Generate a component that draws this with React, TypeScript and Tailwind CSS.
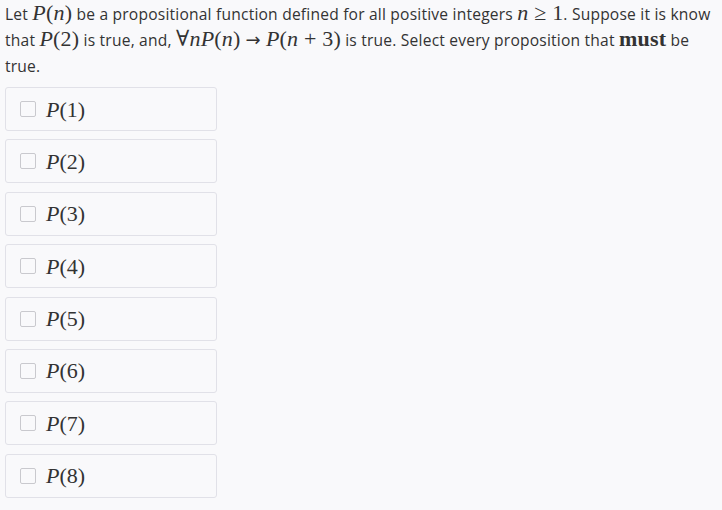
import React from "react";

const SERIF = '"Liberation Serif", "DejaVu Serif", serif';
const M = ({ children }: { children: React.ReactNode }) => (
  <span className="text-[22px] leading-none" style={{ fontFamily: SERIF }}>
    {children}
  </span>
);
const I = ({ children }: { children: React.ReactNode }) => <i>{children}</i>;
const Arrow = () => (
  <span className="text-[18px] mx-[5px]" style={{ fontFamily: '"DejaVu Sans", sans-serif' }}>→</span>
);

export default function App() {
  const items = [1, 2, 3, 4, 5, 6, 7, 8];
  return (
    <div className="min-h-[510px] w-[722px] bg-[#f9f9fb] text-[#333] px-[5px] pt-[1px]" style={{ fontFamily: '"Open Sans", sans-serif' }}>
      <p className="text-[15.6px] leading-[26px] tracking-[0.2px] pr-[4px]">
        Let <M><I>P</I>(<I>n</I>)</M> be a propositional function defined for all positive integers <M><I>n</I> ≥ 1</M>. Suppose it is know that <M><I>P</I>(2)</M> is true, and, <M>∀<I>nP</I>(<I>n</I>)<Arrow /><I>P</I>(<I>n</I> + 3)</M> is true. Select every proposition that <M><b>must</b></M> be true.
      </p>
      <div className="mt-[8px] flex flex-col gap-[8.4px]">
        {items.map((n) => (
          <div key={n} className="w-[212px] h-[44px] border border-[#e1e1e8] rounded-[3px] flex items-center pl-[14px]">
            <span className="w-[16px] h-[16px] border border-[#c9c9ce] rounded-[2px] bg-[#f9f9fb]" />
            <span className="ml-[10px] text-[22px]" style={{ fontFamily: SERIF }}>
              <i>P</i>({n})
            </span>
          </div>
        ))}
      </div>
    </div>
  );
}
